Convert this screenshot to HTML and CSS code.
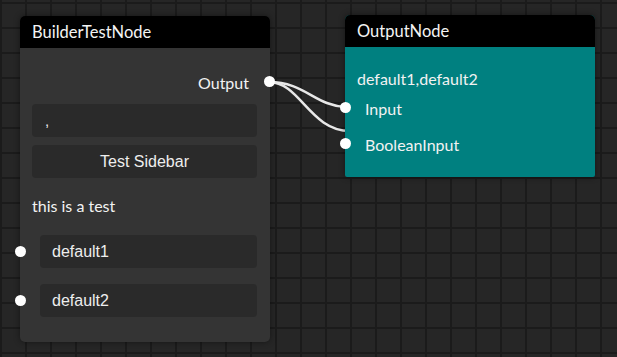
FILE: index.html
```html
<!DOCTYPE html>
<html>
<head>
<meta charset="utf-8">
<link rel="stylesheet" href="styles.css">
</head>
<body>
<div class="canvas">
  <svg class="links" width="617" height="357" viewBox="0 0 617 357">
    <path d="M269 82 C 305 82, 315 106, 346 107" />
    <path d="M269 82 C 300 82, 310 131, 350 131" />
  </svg>

  <div class="node node-builder">
    <div class="node-header">BuilderTestNode</div>
    <div class="node-body">
      <div class="row row-output">
        <span class="label">Output</span>
        <span class="socket socket-out"></span>
      </div>
      <div class="field field-text">,</div>
      <div class="field field-button">Test Sidebar</div>
      <div class="row row-text"><span class="label">this is a test</span></div>
      <div class="field field-input field-first">default1<span class="socket socket-in"></span></div>
      <div class="field field-input field-second">default2<span class="socket socket-in"></span></div>
    </div>
  </div>

  <div class="node node-output">
    <div class="node-header">OutputNode</div>
    <div class="node-body teal">
      <div class="row row-value"><span class="label">default1,default2</span></div>
      <div class="row row-input row-input-first"><span class="socket socket-left"></span><span class="label">Input</span></div>
      <div class="row row-input row-input-second"><span class="socket socket-left"></span><span class="label">BooleanInput</span></div>
    </div>
  </div>
</div>
</body>
</html>
```

FILE: styles.css
```css
html, body {
  margin: 0;
  padding: 0;
}

.canvas {
  position: relative;
  width: 617px;
  height: 357px;
  overflow: hidden;
  background-color: #262626;
  background-image:
    linear-gradient(90deg, #1b1b1b 2px, transparent 2px),
    linear-gradient(#1b1b1b 2px, transparent 2px);
  background-size: 25px 25px;
  background-position: 0 2px;
  font-family: Lato, "Liberation Sans", sans-serif;
  color: #f2f2f2;
}

.links {
  position: absolute;
  left: 0;
  top: 0;
}

.links path {
  fill: none;
  stroke: #e8e8e8;
  stroke-width: 2.5;
}

.node {
  position: absolute;
  width: 250px;
  border-radius: 5px;
  box-shadow: 0 0 6px rgba(0, 0, 0, 0.45);
  display: flex;
  flex-direction: column;
}

.node-builder {
  left: 20px;
  top: 16px;
  height: 326px;
  background: #343434;
}

.node-output {
  left: 345px;
  top: 15px;
  height: 162px;
  background: #008080;
  border-radius: 5px 5px 2px 2px;
}

.node-header {
  height: 32px;
  flex: none;
  background: #000;
  border-radius: 5px 5px 0 0;
  padding-left: 12px;
  display: flex;
  align-items: center;
  font-size: 16.5px;
  color: #f4f4f4;
}

.node-body {
  flex: 1;
  display: flex;
  flex-direction: column;
  padding: 22px 13px 0 12px;
}

.node-body.teal {
  padding: 19px 12px 0 12px;
}

.row {
  position: relative;
  height: 24px;
  display: flex;
  align-items: center;
  font-size: 16px;
}

.row-output {
  justify-content: flex-end;
  padding-right: 8px;
}

.socket {
  position: absolute;
  width: 11px;
  height: 11px;
  border-radius: 50%;
  background: #fff;
}

.socket-out {
  right: -18px;
  top: 6px;
}

.field {
  position: relative;
  height: 33px;
  border-radius: 4px;
  background: #2a2a2a;
  font-family: "Liberation Sans", Arial, sans-serif;
  font-size: 16px;
  display: flex;
  align-items: center;
  color: #eeeeee;
}

.field-text {
  margin-top: 10px;
  padding-left: 13px;
  font-size: 15px;
}

.field-button {
  margin-top: 8px;
  justify-content: center;
}

.row-text {
  margin-top: 15px;
}

.field-input {
  margin-left: 8px;
  padding-left: 12px;
}

.field-first {
  margin-top: 18px;
}

.field-second {
  margin-top: 16px;
}

.socket-in {
  left: -25px;
  top: 11px;
}

.row-input {
  padding-left: 8px;
}

.row-input-first {
  margin-top: 6px;
}

.row-input-second {
  margin-top: 12px;
}

.socket-left {
  left: -17px;
  top: 6px;
}
```
